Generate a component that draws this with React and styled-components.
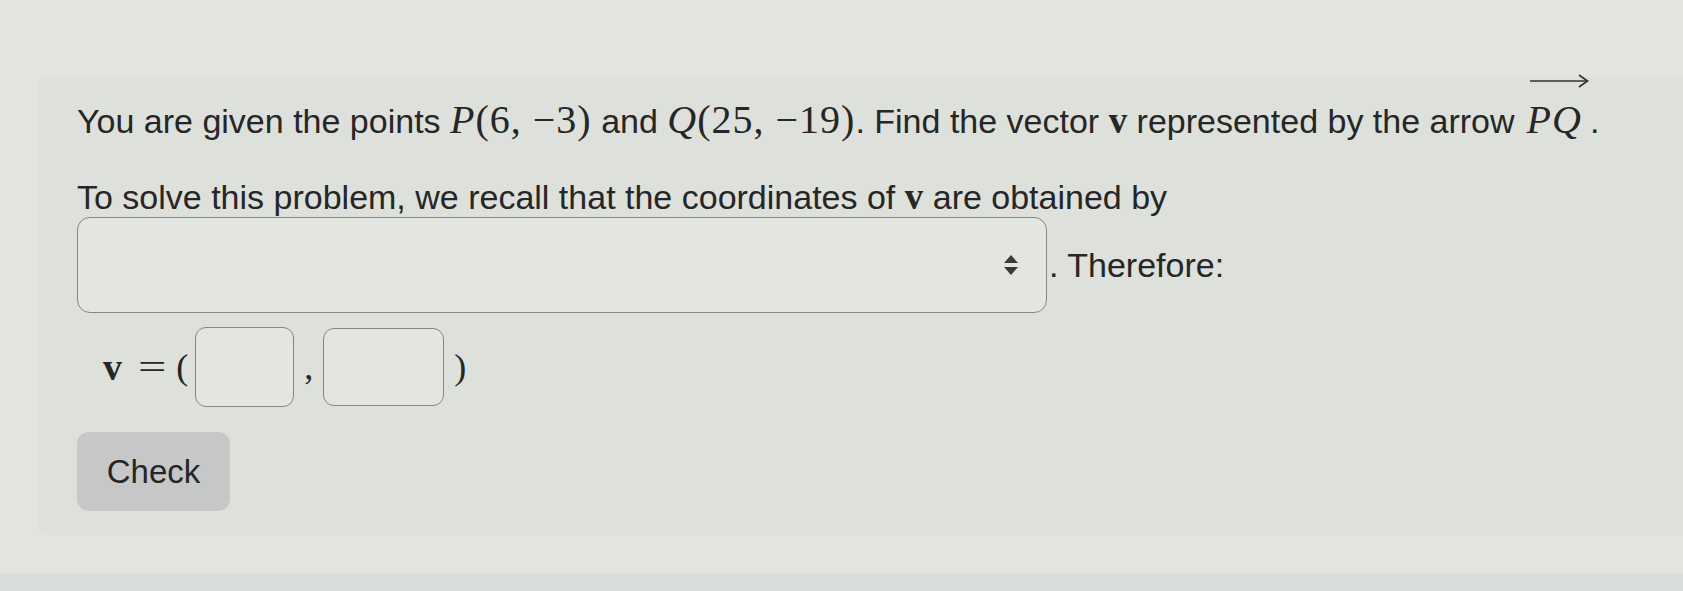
import React from "react";
import styled, { createGlobalStyle } from "styled-components";

const GlobalStyle = createGlobalStyle`
  html, body {
    margin: 0;
    padding: 0;
    background: #e6e4df;
  }
  body {
    font-family: "Liberation Sans", Arial, sans-serif;
    color: #262626;
  }
`;

const Page = styled.div`
  width: 1683px;
  height: 591px;
  overflow: hidden;
  display: flex;
  flex-direction: column;
  background: linear-gradient(to bottom, #e6e4df 0%, #e4e3de 100%);
`;

const Panel = styled.div`
  margin: 76px 0 0 38px;
  height: 460px;
  background: #dde0db;
  border-radius: 10px 0 0 10px;
  padding: 20px 0 0 39px;
  box-sizing: border-box;
  display: flex;
  flex-direction: column;
`;

const BottomBand = styled.div`
  margin-top: auto;
  height: 18px;
  background: #d9dddc;
`;

const Line = styled.p`
  margin: 0;
  font-size: 34px;
  line-height: ${p => p.$h || 40}px;
  margin-top: ${p => p.$mt || 0}px;
  white-space: nowrap;
`;

const M = styled.span`
  font-family: "Liberation Serif", "Times New Roman", serif;
  font-size: 40px;
  letter-spacing: 1px;
`;

const I = styled.span`
  font-style: italic;
`;

const Bold = styled.span`
  font-family: "Liberation Serif", "Times New Roman", serif;
  font-weight: bold;
  font-size: 37px;
`;

const Vec = styled.span`
  position: relative;
  display: inline-block;
  margin-left: 12px;
  margin-right: 8px;
  svg {
    position: absolute;
    left: 2px;
    top: -22px;
  }
`;

const SelectRow = styled.div`
  display: flex;
  align-items: center;
`;

const Select = styled.div`
  width: 970px;
  height: 96px;
  box-sizing: border-box;
  border: 1.5px solid #858785;
  border-radius: 13px;
  background: #e3e5e1;
  display: flex;
  align-items: center;
  justify-content: flex-end;
  padding-right: 27px;
`;

const After = styled.span`
  font-size: 34px;
  margin-left: 2px;
`;

const VRow = styled.div`
  display: flex;
  align-items: center;
  margin-top: 14px;
  padding-left: 26px;
`;

const Sym = styled.span`
  font-family: "Liberation Serif", "Times New Roman", serif;
  font-size: ${p => (p.$bold ? 38 : 36)}px;
  margin: ${p => p.$m || "0"};
  font-weight: ${p => (p.$bold ? "bold" : "normal")};
`;

const Eq = styled(Sym)`
  display: inline-block;
  transform: scaleX(1.4);
`;

const Blank = styled.div`
  width: ${p => p.$w}px;
  height: ${p => p.$h}px;
  box-sizing: border-box;
  border: 1.5px solid #858785;
  border-radius: 11px;
  background: #e3e5e1;
`;

const Check = styled.button`
  margin-top: 25px;
  width: 153px;
  height: 79px;
  border: none;
  border-radius: 12px;
  background: #c6c8c8;
  color: #262626;
  font-family: "Liberation Sans", Arial, sans-serif;
  font-size: 33px;
  padding: 0;
`;

const Spinner = () => (
  <svg width="16" height="24" viewBox="0 0 16 24">
    <path d="M8 2 L15 10 H1 Z" fill="#3a3a3a" />
    <path d="M8 22 L15 14 H1 Z" fill="#3a3a3a" />
  </svg>
);

const Arrow = () => (
  <svg width="60" height="14" viewBox="0 0 60 14">
    <path d="M1 7 H58" stroke="#333" strokeWidth="1.7" />
    <path d="M50 1 L58.5 7 L50 13" stroke="#333" strokeWidth="1.7" fill="none" />
  </svg>
);

export default function App() {
  return (
    <Page>
      <GlobalStyle />
      <Panel>
        <Line $h={48}>
          You are given the points{" "}
          <M>
            <I>P</I>(6, −3)
          </M>{" "}
          and{" "}
          <M>
            <I>Q</I>(25, −19)
          </M>
          . Find the vector <Bold>v</Bold> represented by the arrow
          <Vec>
            <Arrow />
            <M>
              <I>PQ</I>
            </M>
          </Vec>
          .
        </Line>
        <Line $h={40} $mt={32}>
          To solve this problem, we recall that the coordinates of <Bold>v</Bold>{" "}
          are obtained by
        </Line>
        <SelectRow>
          <Select>
            <Spinner />
          </Select>
          <After>. Therefore:</After>
        </SelectRow>
        <VRow>
          <Sym $bold>v</Sym>
          <Eq $m="0 14px 0 20px">=</Eq>
          <Sym $m="0 7px 0 0">(</Sym>
          <Blank $w={99} $h={80} />
          <Sym $m="0 10px">,</Sym>
          <Blank $w={121} $h={78} />
          <Sym $m="0 0 0 10px">)</Sym>
        </VRow>
        <div>
          <Check>Check</Check>
        </div>
      </Panel>
      <BottomBand />
    </Page>
  );
}
